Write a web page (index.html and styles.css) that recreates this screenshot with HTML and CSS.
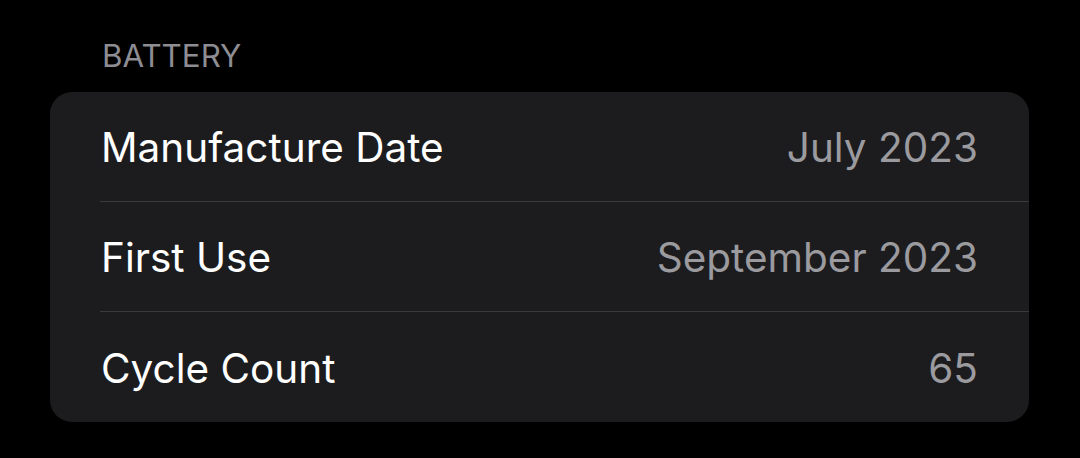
FILE: index.html
```html
<!DOCTYPE html>
<html>
<head>
<meta charset="utf-8">
<link rel="stylesheet" href="styles.css">
</head>
<body>
<div class="page">
  <div class="section-header">BATTERY</div>
  <div class="card">
    <div class="row">
      <span class="label">Manufacture Date</span>
      <span class="value">July 2023</span>
    </div>
    <div class="row">
      <span class="label">First Use</span>
      <span class="value">September 2023</span>
    </div>
    <div class="row">
      <span class="label">Cycle Count</span>
      <span class="value">65</span>
    </div>
  </div>
</div>
</body>
</html>
```
FILE: styles.css
```css
html, body {
  margin: 0;
  padding: 0;
  background: #000;
  width: 1080px;
  height: 458px;
  overflow: hidden;
}
.page {
  padding: 38px 51px 0 50px;
  font-family: Inter, "Noto Sans", sans-serif;
}
.section-header {
  color: #8d8d93;
  font-size: 31.3px;
  line-height: 36px;
  padding-left: 52px;
  height: 54px;
}
.card {
  background: #1c1c1e;
  border-radius: 22px;
  overflow: hidden;
}
.row {
  display: flex;
  justify-content: space-between;
  align-items: center;
  height: 110px;
  margin-left: 50px;
  padding-right: 51px;
  padding-left: 1px;
  padding-top: 2px;
  box-sizing: border-box;
  border-top: 1px solid #3a3a3c;
}
.row:first-child {
  border-top: none;
  height: 109px;
}
.row:last-child {
  height: 111px;
}
.label {
  color: #fff;
  font-size: 40.5px;
}
.value {
  color: #9a9a9f;
  font-size: 40.5px;
}
```
